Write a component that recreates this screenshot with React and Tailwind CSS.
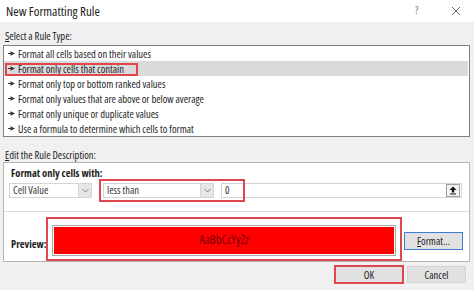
const RULE_TYPES = [
  'Format all cells based on their values',
  'Format only cells that contain',
  'Format only top or bottom ranked values',
  'Format only values that are above or below average',
  'Format only unique or duplicate values',
  'Use a formula to determine which cells to format',
];

const FONT = { fontFamily: '"Open Sans", "Noto Sans", sans-serif' };

function Chevron() {
  return (
    <svg width="7" height="5" viewBox="0 0 7 5">
      <path d="M0.5 1 L3.5 4 L6.5 1" fill="none" stroke="#777" strokeWidth="0.9" />
    </svg>
  );
}

function Bullet() {
  return (
    <svg width="7" height="5" viewBox="0 0 7 5" className="mr-[3px] shrink-0">
      <path d="M0 2.5 L3 2.5" stroke="#333" strokeWidth="1" />
      <path d="M2.5 0.3 L7 2.5 L2.5 4.7 Z" fill="#333" />
    </svg>
  );
}

function Combo({ label, width }) {
  return (
    <div className={`flex h-[15px] ${width} border border-[#d4d4d4] bg-white`}>
      <span className="flex-1 pl-[3px] text-[10.5px] leading-[13px] text-[#333]">{label}</span>
      <span className="flex w-[13px] items-center justify-center border-l border-[#d4d4d4] bg-[#e6e6e6]">
        <Chevron />
      </span>
    </div>
  );
}

export default function App() {
  return (
    <div className="w-[474px] h-[290px] overflow-hidden bg-[#f0f0f0] text-[#1e1e1e] font-stretch-semi-condensed" style={FONT}>
      {/* Title bar */}
      <div className="flex h-[22px] items-center bg-white pl-[6px]">
        <span className="flex-1 text-[13px] leading-[16px] text-[#222]">New Formatting Rule</span>
        <span className="w-[8px] text-[10.5px] text-[#666]">?</span>
        <span className="ml-[28px] mr-[13px] flex w-[10px] justify-center">
          <svg width="10" height="10" viewBox="0 0 10 10">
            <path d="M1 1 L9 9 M9 1 L1 9" stroke="#555" strokeWidth="0.9" />
          </svg>
        </span>
      </div>

      <div className="px-[3px]">
        <div className="mt-[8px] h-[12px] pl-[2px] text-[10.5px] leading-[12px]">
          <span className="underline">S</span>elect a Rule Type:
        </div>

        {/* Rule type list */}
        <div className="mt-[3px] h-[92px] w-[467px] border border-[#7f7f7f] bg-white">
          {RULE_TYPES.map((t, i) => (
            <div
              key={t}
              className={`relative flex h-[15px] items-center pl-[4px] text-[10.5px] leading-[12px] ${i === 1 ? 'mr-[1px] bg-[#dadada]' : ''}`}
            >
              <Bullet />
              <span>{t}</span>
              {i === 1 && (
                <div className="absolute left-[1px] top-[2px] h-[13px] w-[133px] border-2 border-[#e0474c]" />
              )}
            </div>
          ))}
        </div>

        <div className="mt-[12px] h-[12px] pl-[2px] text-[10.5px] leading-[12px]">
          <span className="underline">E</span>dit the Rule Description:
        </div>

        {/* Rule description panel */}
        <div className="mt-[1px] flex h-[100px] w-[467px] flex-col border border-[#b5b5b5] bg-white">
          <div className="h-[16px] pl-[7px] pt-[5px] text-[10.5px] font-bold leading-[11px]">Format only cells with:</div>
          <div className="mt-[4px] flex h-[15px] items-center pl-[5px]">
            <Combo label="Cell Value" width="w-[83px]" />
            <div className="relative ml-[11px] flex items-center">
              <Combo label="less than" width="w-[111px]" />
              <div className="absolute left-[-4px] top-[-4px] h-[23px] w-[146px] border-2 border-[#e0474c]" />
            </div>
            <div className="ml-[7px] flex h-[15px] w-[241px] items-center border border-[#d4d4d4] bg-white">
              <span className="flex-1 pl-[3px] text-[10.5px] leading-[13px] text-[#333]">0</span>
              <span className="mr-[1px] flex h-[13px] w-[14px] items-center justify-center border border-[#a0a0a0] bg-[#f4f4f4]">
                <svg width="8" height="9" viewBox="0 0 8 9">
                  <path d="M4 0.5 L7.5 4 L5.2 4 L5.2 6.5 L2.8 6.5 L2.8 4 L0.5 4 Z" fill="#111" />
                  <rect x="1" y="7.5" width="6" height="1" fill="#111" />
                </svg>
              </span>
            </div>
          </div>
          <div className="mt-[13px] h-px shrink-0 bg-[#dcdcdc]" />
          <div className="flex flex-1 items-start pl-[7px]">
            <span className="mt-[26px] w-[35px] text-[10.5px] font-bold leading-[12px]">Preview:</span>
            <div className="mt-[5px] h-[44px] w-[356px] shrink-0 border-2 border-[#e0474c] px-[4px] pt-[6px]">
              <div className="h-[31px] w-[344px] border border-[#a8a8a8] bg-white p-[1px]">
                <div className="flex h-full items-center justify-center bg-[#ff0000] text-[12.5px] text-[#7a0000]">
                  AaBbCcYyZz
                </div>
              </div>
            </div>
            <div className="ml-[2px] mt-[20px] flex h-[18px] w-[59px] items-center justify-center border border-[#3c7fd2] bg-[#e1e1e1] text-[10.5px] leading-[12px] text-[#222]">
              <span className="underline">F</span>ormat...
            </div>
          </div>
        </div>

        {/* Footer buttons */}
        <div className="mt-[4px] flex items-center justify-end pr-[5px]">
          <div className="relative flex h-[17px] w-[66px] items-center justify-center bg-[#e1e1e1] text-[10.5px] leading-[12px] text-[#222]">
            OK
            <div className="absolute left-[-2px] top-[-1px] h-[19px] w-[70px] border-2 border-[#e0474c]" />
          </div>
          <div className="ml-[5px] flex h-[17px] w-[59px] items-center justify-center border border-[#d4d4d4] bg-[#e1e1e1] text-[10.5px] leading-[12px] text-[#222]">
            Cancel
          </div>
        </div>
      </div>
    </div>
  );
}
